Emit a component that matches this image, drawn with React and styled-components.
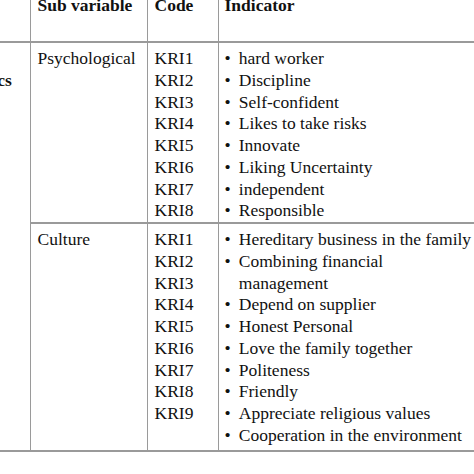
import React from 'react';
import styled, { createGlobalStyle } from 'styled-components';

const Global = createGlobalStyle`
  html, body {
    margin: 0;
    padding: 0;
    background: #fff;
    overflow: hidden;
  }
  body {
    font-family: 'Liberation Serif', 'Times New Roman', serif;
    color: #111;
  }
`;

const Page = styled.div`
  width: 474px;
  height: 474px;
  overflow: hidden;
  position: relative;
`;

const Table = styled.table`
  border-collapse: collapse;
  margin-top: -10px;
  margin-left: -110px;
  font-family: 'Liberation Serif', 'Times New Roman', serif;
  font-size: 17.5px;
  line-height: 21.75px;
  table-layout: fixed;
  width: 700px;
  color: #111;
`;

const lineColor = '#9a9a9a';

const HeadCell = styled.th`
  text-align: left;
  vertical-align: top;
  font-weight: 700;
  height: 52px;
  padding: 5px ${({ $pad }) => $pad ?? 7}px 0;
  box-sizing: border-box;
  border-bottom: 2px solid ${lineColor};
  border-left: ${({ $first }) => ($first ? 'none' : `1px solid ${lineColor}`)};
  white-space: nowrap;
`;

const Cell = styled.td`
  vertical-align: top;
  padding: 5px ${({ $pad }) => $pad ?? 7}px ${({ $bottom }) => $bottom ?? 0}px;
  border-left: ${({ $first }) => ($first ? 'none' : `1px solid ${lineColor}`)};
  border-bottom: 2px solid ${lineColor};
  white-space: nowrap;
`;

const VarName = styled.div`
  font-weight: 700;
  padding-left: 13px;
`;

const Code = styled.div``;

const List = styled.ul`
  list-style: none;
  margin: 0;
  padding: 0 0 0 6px;
`;

const Item = styled.li`
  display: flex;
  &::before {
    content: '•';
    flex: 0 0 14.3px;
  }
`;

const groups = [
  {
    name: 'Psychological',
    codes: ['KRI1', 'KRI2', 'KRI3', 'KRI4', 'KRI5', 'KRI6', 'KRI7', 'KRI8'],
    items: [
      'hard worker',
      'Discipline',
      'Self-confident',
      'Likes to take risks',
      'Innovate',
      'Liking Uncertainty',
      'independent',
      'Responsible',
    ],
    bottom: 0,
  },
  {
    name: 'Culture',
    codes: ['KRI1', 'KRI2', 'KRI3', 'KRI4', 'KRI5', 'KRI6', 'KRI7', 'KRI8', 'KRI9'],
    items: [
      'Hereditary business in the family',
      ['Combining financial', 'management'],
      'Depend on supplier',
      'Honest Personal',
      'Love the family together',
      'Politeness',
      'Friendly',
      'Appreciate religious values',
      'Cooperation in the environment',
    ],
    bottom: 3,
  },
];

const App = () => (
  <Page>
    <Global />
    <Table>
      <colgroup>
        <col style={{ width: 140 }} />
        <col style={{ width: 117 }} />
        <col style={{ width: 71 }} />
        <col />
      </colgroup>
      <thead>
        <tr>
          <HeadCell $first>Variable</HeadCell>
          <HeadCell>Sub variable</HeadCell>
          <HeadCell>Code</HeadCell>
          <HeadCell $pad={6}>Indicator</HeadCell>
        </tr>
      </thead>
      <tbody>
        {groups.map((g, gi) => (
          <tr key={g.name}>
            {gi === 0 && (
              <Cell $first rowSpan={2} $pad={0}>
                <VarName>
                  Business
                  <br />
                  characteristics
                </VarName>
              </Cell>
            )}
            <Cell $bottom={g.bottom}>{g.name}</Cell>
            <Cell $bottom={g.bottom}>
              {g.codes.map((c) => (
                <Code key={c}>{c}</Code>
              ))}
            </Cell>
            <Cell $pad={0} $bottom={g.bottom}>
              <List>
                {g.items.map((it, i) => (
                  <Item key={i}>
                    {Array.isArray(it) ? (
                      <span>
                        {it[0]}
                        <br />
                        {it[1]}
                      </span>
                    ) : (
                      <span>{it}</span>
                    )}
                  </Item>
                ))}
              </List>
            </Cell>
          </tr>
        ))}
      </tbody>
    </Table>
  </Page>
);

export default App;
